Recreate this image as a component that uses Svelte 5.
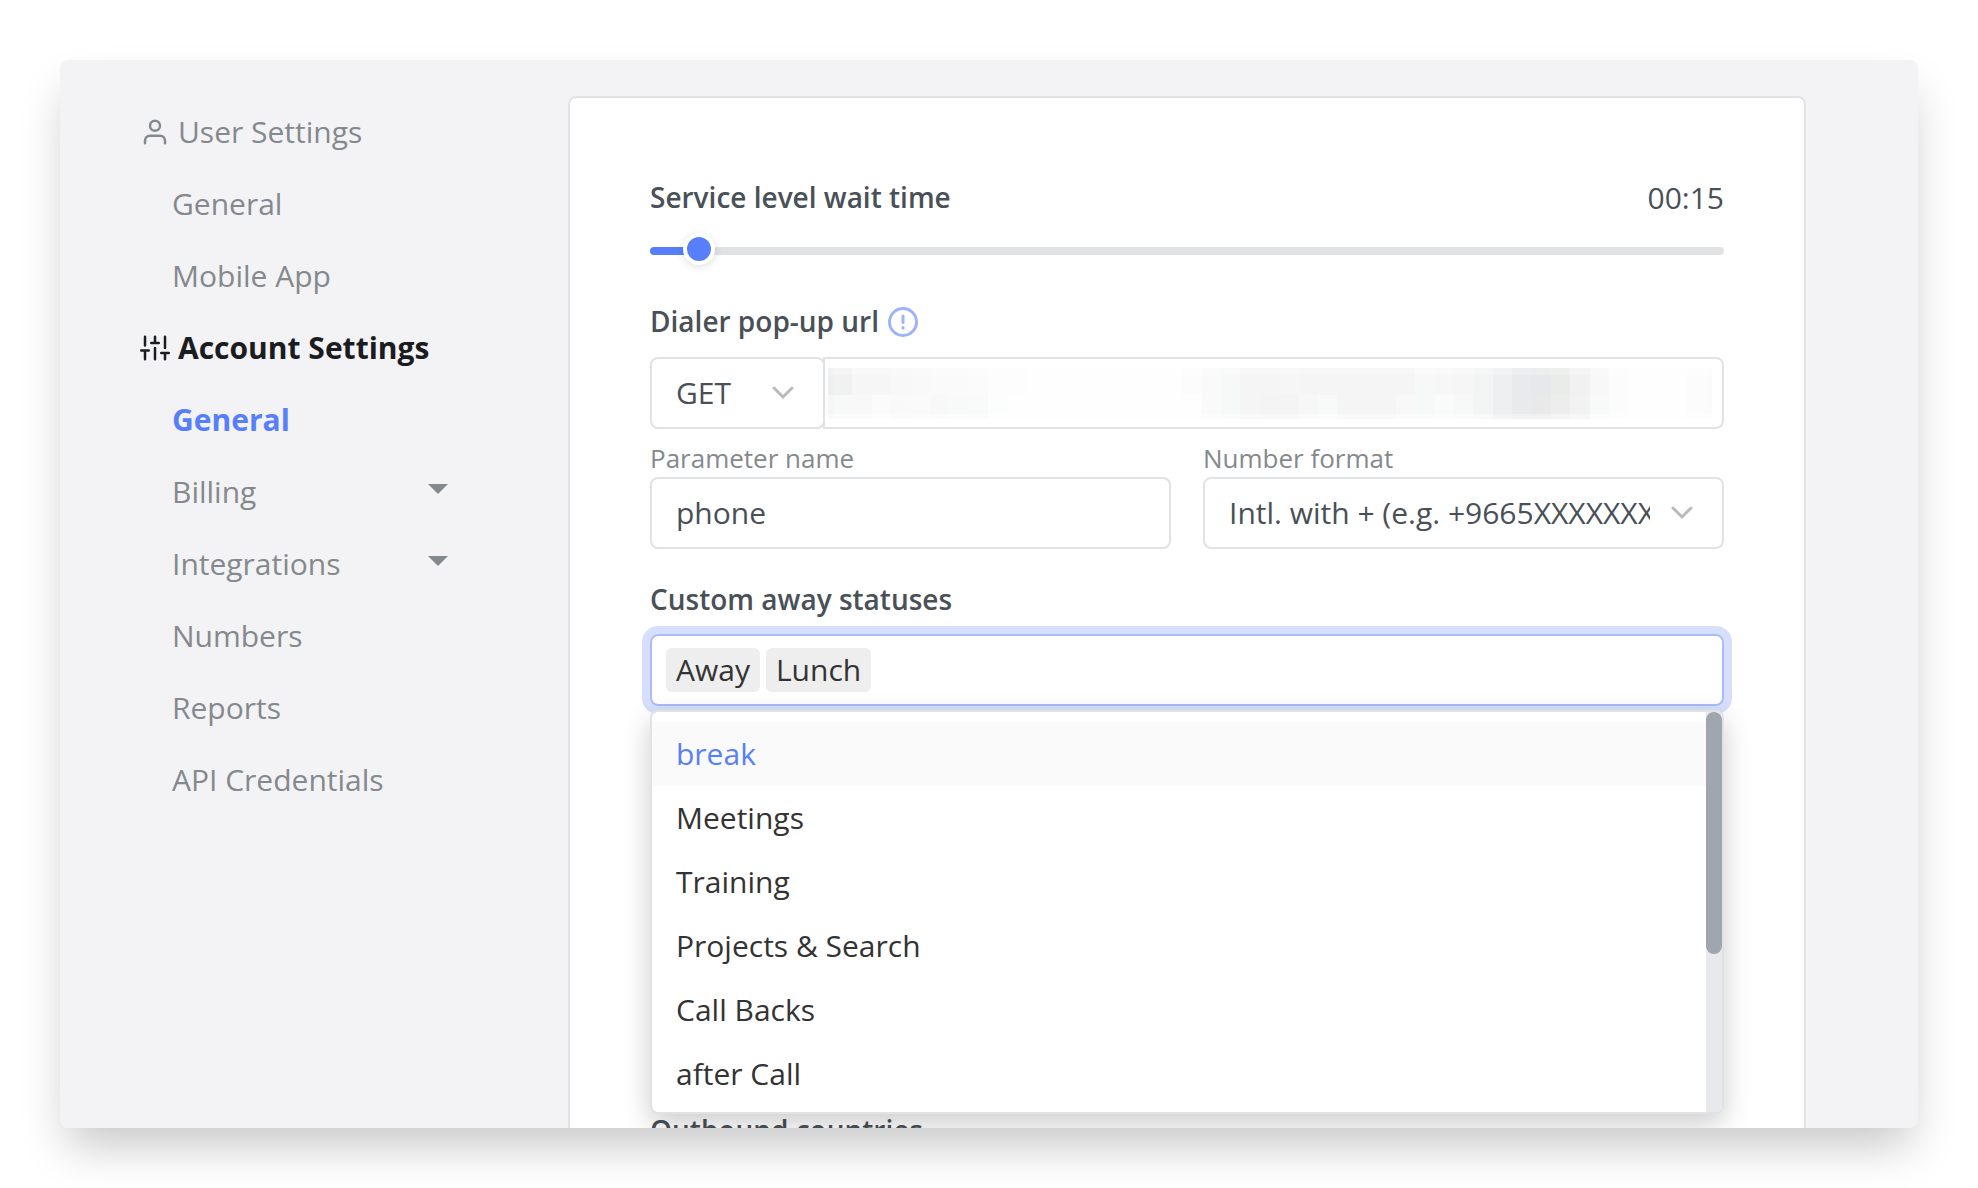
<script lang="ts">
  let waitTime = 15;
  const maxWait = 480;
  let method = "GET";
  let url = "";
  let paramName = "phone";
  let numberFormat = "intl";

  const userLinks = ["General", "Mobile App"];
  const accountLinks = [
    { name: "General", active: true },
    { name: "Billing", expandable: true },
    { name: "Integrations", expandable: true },
    { name: "Numbers" },
    { name: "Reports" },
    { name: "API Credentials" },
  ];

  const selected = ["Away", "Lunch"];
  const statuses = [
    "break",
    "Meetings",
    "Training",
    "Projects & Search",
    "Call Backs",
    "after Call",
  ];

  // pixelated cover over the url, one colour per block
  const blank = Array(8).fill("fefefe");
  const upper = [
    ..."eeeff0 f1f1f2 f5f6f5 f6f6f6 f8f8f8 f9f9f9 f9faf9 f9faf9 fafbfa fcfdfc fdfdfd".split(" "),
    ...blank,
    ..."fcfcfc fafafa f7f9f8 f5f5f5 f5f5f5 f5f6f5 f5f5f5 f5f5f5 f5f5f5 f5f5f5 f5f5f5 f5f5f5".split(" "),
    ..."f7f9f8 f7f7f7 f6f6f6 f3f4f4 eeeff1 e9eaec e7e8eb eaecea f1f1f1 f8f8f8 fcfcfc".split(" "),
    ..."fefefe fefefe fefefe fcfcfc fbfbfb".split(" "),
  ];
  const lower = [
    ..."f6f6f6 f7f8f8 f8f8f8 fbfbfb f9f9f9 f9faf9 f8f8f8 f8faf9 f9fbfa fcfefd fefefe".split(" "),
    ...blank,
    ..."fdfefd fafafa f7f9f8 f5f5f5 f4f4f4 f4f4f4 f6f7f6 f8faf9 f5f5f5 f5f5f5 f5f5f5 f7f8f7".split(" "),
    ..."f7f9f8 f9fbfa f7f9f8 f3f5f4 eeeff1 e8eaec e9e9e9 ededed f2f2f2 f8faf9 fcfcfc".split(" "),
    ..."fefefe fefefe fefefe fcfcfc fbfbfb".split(" "),
  ];
  const bands = [
    { y: 0, height: 7, colors: upper, opacity: 0.8 },
    { y: 7, height: 20, colors: upper, opacity: 1 },
    { y: 27, height: 19, colors: lower, opacity: 1 },
    { y: 46, height: 5, colors: lower, opacity: 0.6 },
  ];
  const blockX = (i) => (i == 0 ? 0 : Math.round(5 + (i - 1) * 19.4));
  const blockWidth = (i) => Math.min(blockX(i + 1), 884) - blockX(i);

  $: fill = (waitTime / maxWait) * 100;
  $: clock =
    String(Math.floor(waitTime / 60)).padStart(2, "0") +
    ":" +
    String(waitTime % 60).padStart(2, "0");
</script>

<div class="page">
  <div class="window">
    <nav class="sidebar">
      <a class="section" href="#user">
        <svg class="icon" viewBox="0 0 24 24">
          <path d="M20 21v-2a4 4 0 0 0-4-4H8a4 4 0 0 0-4 4v2" />
          <circle cx="12" cy="7" r="4" />
        </svg>
        User Settings
      </a>
      {#each userLinks as link}
        <a class="item" href="#user">{link}</a>
      {/each}
      <a class="section current" href="#account">
        <svg class="icon" viewBox="0 0 24 24">
          <path
            d="M4 21v-7M4 10V3M12 21v-9M12 8V3M20 21v-5M20 12V3M1 14h6M9 8h6M17 16h6"
          />
        </svg>
        Account Settings
      </a>
      {#each accountLinks as link}
        <a class="item" class:active={link.active} href="#account">
          {link.name}
          {#if link.expandable}
            <span class="caret"></span>
          {/if}
        </a>
      {/each}
    </nav>

    <main class="card">
      <div class="row-head">
        <label class="title" for="wait">Service level wait time</label>
        <output class="clock" for="wait">{clock}</output>
      </div>
      <input
        id="wait"
        class="slider"
        type="range"
        min="0"
        max={maxWait}
        bind:value={waitTime}
        style="--fill: {fill}%"
      />

      <div class="title-row">
        <label class="title" for="url">Dialer pop-up url</label>
        <svg class="info" viewBox="0 0 30 30">
          <circle cx="15" cy="15" r="13.5" />
          <path d="M15 9v6.5M15 20.5v.4" />
        </svg>
      </div>
      <div class="url-row">
        <div class="select method">
          <select aria-label="Method" bind:value={method}>
            <option>GET</option>
          </select>
          <svg class="chevron" viewBox="0 0 24 16"><path d="M3 3l9 9 9-9" /></svg>
        </div>
        <div class="url">
          <input id="url" class="field" type="text" bind:value={url} />
          <svg class="mosaic" viewBox="0 0 884 51" preserveAspectRatio="none">
            {#each bands as band}
              {#each band.colors as color, i}
                <rect
                  x={blockX(i)}
                  y={band.y}
                  width={blockWidth(i)}
                  height={band.height}
                  fill="#{color}"
                  opacity={band.opacity}
                />
              {/each}
            {/each}
          </svg>
        </div>
      </div>

      <div class="columns">
        <div>
          <label class="small" for="param">Parameter name</label>
          <input id="param" class="field" type="text" bind:value={paramName} />
        </div>
        <div>
          <label class="small" for="format">Number format</label>
          <div class="select">
            <select id="format" bind:value={numberFormat}>
              <option value="intl">Intl. with + (e.g. +9665XXXXXXXX)</option>
            </select>
            <svg class="chevron" viewBox="0 0 24 16"><path d="M3 3l9 9 9-9" /></svg>
          </div>
        </div>
      </div>

      <label class="title statuses-title" for="statuses">Custom away statuses</label>
      <div class="multi">
        <div class="multi-box">
          {#each selected as name}
            <span class="chip">{name}</span>
          {/each}
          <input id="statuses" class="search" type="text" />
        </div>
        <div class="menu">
          <div class="options" role="listbox">
            {#each statuses as name, i}
              <button class="option" class:highlight={i == 0} role="option" aria-selected="false">
                {name}
              </button>
            {/each}
          </div>
          <div class="scrollbar"><div class="thumb"></div></div>
        </div>
      </div>

      <p class="title">Outbound countries</p>
    </main>
  </div>
</div>

<style>
  :global(body) {
    background: white;
  }

  .page {
    box-sizing: border-box;
    height: 100vh;
    padding: 60px;
    overflow: hidden;
    font-family: "Open Sans", sans-serif;
    font-size: 30px;
    line-height: 40px;
    color: #495057;
  }

  .page * {
    box-sizing: border-box;
  }

  .window {
    display: flex;
    height: 100%;
    padding: 36px 112px 0 80px;
    overflow: hidden;
    background: #f3f3f6;
    border-radius: 8px;
    box-shadow: 0 25px 46px -7px rgba(0, 0, 0, 0.22);
  }

  .sidebar {
    flex: none;
    width: 428px;
  }

  .sidebar a {
    display: flex;
    align-items: center;
    height: 72px;
    color: #84898d;
    text-decoration: none;
  }

  .sidebar .section {
    gap: 8px;
  }

  .sidebar .section.current {
    color: #1b1c1f;
    font-weight: 700;
  }

  .sidebar .item {
    justify-content: space-between;
    padding: 0 120px 0 32px;
  }

  .sidebar .item.active {
    color: #587ffa;
    font-weight: 700;
  }

  .icon {
    width: 30px;
    height: 30px;
    fill: none;
    stroke: currentColor;
    stroke-width: 2;
    stroke-linecap: round;
    stroke-linejoin: round;
  }

  .caret {
    margin-bottom: 6px;
    border: 10px solid transparent;
    border-top-color: currentColor;
    border-bottom: none;
  }

  .card {
    flex: 1;
    min-width: 0;
    height: max-content;
    padding: 80px;
    background: white;
    border: 2px solid #e1e2e4;
    border-radius: 8px;
  }

  .row-head,
  .title-row {
    display: flex;
    align-items: flex-start;
    height: 40px;
  }

  .row-head {
    justify-content: space-between;
  }

  .title {
    display: block;
    margin: 0;
    font-size: 28px;
    line-height: 38px;
    font-weight: 600;
  }

  .small {
    display: block;
    font-size: 26px;
    line-height: 38px;
    color: #84898d;
  }

  .slider {
    display: block;
    width: 100%;
    height: 34px;
    margin: 16px 0 34px;
    appearance: none;
    background: none;
  }

  .slider::-webkit-slider-runnable-track {
    height: 8px;
    border-radius: 4px;
    background: linear-gradient(
      to right,
      #587ffa var(--fill),
      #e1e2e4 var(--fill)
    );
  }

  .slider::-webkit-slider-thumb {
    appearance: none;
    width: 32px;
    height: 32px;
    margin-top: -14px;
    border: 4px solid white;
    border-radius: 50%;
    background: #587ffa;
    box-shadow: 0 2px 8px rgba(0, 0, 0, 0.12);
  }

  .title-row {
    gap: 9px;
  }

  .info {
    width: 30px;
    height: 40px;
    fill: none;
    stroke: #9db3fc;
    stroke-width: 3;
    stroke-linecap: round;
  }

  .url-row {
    display: flex;
    margin: 15px 0 10px;
  }

  .method {
    flex: none;
    width: 175px;
  }

  .field,
  .select select {
    display: block;
    width: 100%;
    height: 72px;
    padding: 0 24px;
    appearance: none;
    border: 2px solid #e1e2e4;
    border-radius: 8px;
    background: white;
    color: inherit;
    font: inherit;
    outline: none;
  }

  .field {
    padding-bottom: 2px;
  }

  .select {
    position: relative;
  }

  .select select {
    padding-right: 72px;
  }

  .chevron {
    position: absolute;
    top: 28px;
    right: 30px;
    width: 24px;
    height: 16px;
    fill: none;
    stroke: #b8babd;
    stroke-width: 3;
    stroke-linecap: round;
    pointer-events: none;
  }

  .url {
    position: relative;
    flex: 1;
    margin-left: -2px;
  }

  .url .field {
    border-top-left-radius: 0;
    border-bottom-left-radius: 0;
  }

  .mosaic {
    position: absolute;
    top: 11px;
    left: 5px;
    width: calc(100% - 17px);
    height: 51px;
    shape-rendering: crispEdges;
    pointer-events: none;
  }

  .columns {
    display: grid;
    grid-template-columns: 1fr 1fr;
    gap: 32px;
  }

  .statuses-title {
    margin: 31px 0 16px;
  }

  .multi {
    position: relative;
    margin-bottom: 405px;
  }

  .multi-box {
    display: flex;
    align-items: center;
    gap: 6px;
    height: 72px;
    padding: 0 14px;
    border: 2px solid #a8bcf9;
    border-radius: 8px;
    box-shadow: 0 0 0 8px #d6dffe;
    color: #333;
  }

  .chip {
    height: 44px;
    padding: 0 10px;
    line-height: 44px;
    border-radius: 6px;
    background: #eee;
  }

  .search {
    flex: 1;
    min-width: 0;
    border: none;
    background: none;
    font: inherit;
    outline: none;
  }

  .menu {
    position: absolute;
    top: 76px;
    left: 0;
    right: 0;
    display: flex;
    overflow: hidden;
    background: white;
    border: 2px solid #e1e2e4;
    border-radius: 8px;
    box-shadow: 0 10px 28px rgba(0, 0, 0, 0.2);
  }

  .options {
    flex: 1;
    padding: 10px 0 6px;
  }

  .option {
    display: block;
    width: 100%;
    height: 64px;
    padding: 0 24px;
    border: none;
    background: none;
    color: #333;
    font: inherit;
    text-align: left;
  }

  .option.highlight {
    background: #fafafa;
    color: #587ffa;
  }

  .scrollbar {
    width: 16px;
    background: #e8e9ec;
  }

  .thumb {
    height: 242px;
    border-radius: 8px;
    background: #9fa6ad;
  }
</style>
